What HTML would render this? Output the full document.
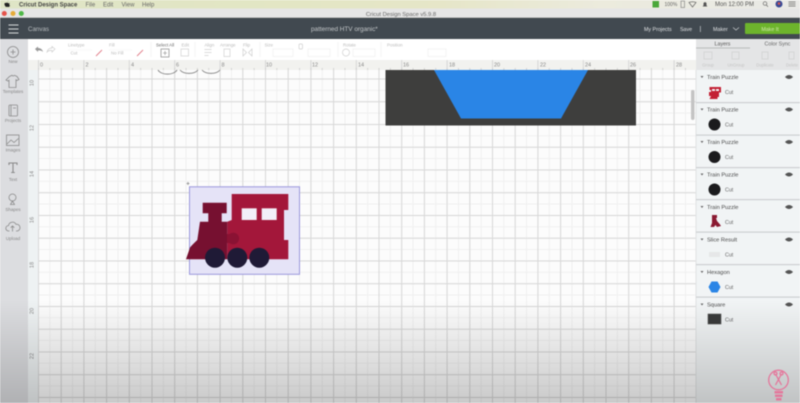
<!DOCTYPE html>
<html><head><meta charset="utf-8"><style>
html,body{margin:0;padding:0;background:#fff;width:800px;height:403px;overflow:hidden}
svg{display:block;filter:blur(.6px)}
text{font-family:"Liberation Sans",sans-serif}
.l{font-size:4.5px;fill:#888;text-anchor:middle}
.t{font-size:4.4px;fill:#bbb}
.r{font-size:5.5px;fill:#888}
.n{font-size:5.7px;fill:#4a4a4a}
.c{font-size:5.3px;fill:#666}
.d{font-size:4.2px;fill:#c4c4c4;text-anchor:middle}
.i{fill:none;stroke:#8a8a8a;stroke-width:.8}
.g{fill:none;stroke:#cfcfcf;stroke-width:.7}
.m{font-size:6px;fill:#666}
</style></head><body>
<svg width="800" height="403" viewBox="0 0 800 403" xmlns="http://www.w3.org/2000/svg">
<defs>
<linearGradient id="mb" x1="0" x2="1" y1="0" y2="0"><stop offset="0" stop-color="#dfe5c6"/><stop offset=".35" stop-color="#e3e6c4"/><stop offset=".55" stop-color="#e6e6c8"/><stop offset=".75" stop-color="#ecebdd"/><stop offset="1" stop-color="#e9e9e6"/></linearGradient>
<linearGradient id="sh" x1="0" x2="0" y1="0" y2="1"><stop offset="0" stop-color="#000" stop-opacity="0"/><stop offset="1" stop-color="#000" stop-opacity=".2"/></linearGradient>
<pattern id="gmin" x="38" y="67.1" width="11.35" height="11.37" patternUnits="userSpaceOnUse"><path d="M.5 0V11.37M0 .5H11.35" stroke="#f0f0f0" stroke-width="1" fill="none"/></pattern>
<pattern id="gmaj" x="38" y="78.5" width="22.7" height="22.75" patternUnits="userSpaceOnUse"><path d="M.5 0V22.75M0 .5H22.7" stroke="#d8d8d8" stroke-width="1" fill="none"/></pattern>
<pattern id="tick" x="38" y="60" width="11.35" height="10" patternUnits="userSpaceOnUse"><path d="M.5 8V10" stroke="#c4c4c4" stroke-width=".7"/></pattern>
<pattern id="tick2" x="38" y="60" width="45.4" height="10" patternUnits="userSpaceOnUse"><path d="M.5 0V10" stroke="#d0d0d0" stroke-width=".8"/></pattern>
</defs>

<rect x="28" y="60" width="668" height="343" fill="#fcfcfc"/>
<rect x="38" y="70" width="658" height="333" fill="url(#gmin)"/>
<rect x="38" y="70" width="658" height="333" fill="url(#gmaj)"/>

<rect x="28" y="60" width="668" height="10" fill="#f2f2ef"/>
<rect x="38" y="60" width="658" height="10" fill="url(#tick)"/>
<rect x="38" y="60" width="658" height="10" fill="url(#tick2)"/>
<rect x="28" y="70" width="10" height="333" fill="#eef2f3"/>
<g class="r">
<text x="40" y="66.5">0</text><text x="85.5" y="66.5">2</text><text x="131" y="66.5">4</text><text x="176" y="66.5">6</text><text x="221.5" y="66.5">8</text><text x="266" y="66.5">10</text><text x="312" y="66.5">12</text><text x="358" y="66.5">14</text><text x="403" y="66.5">16</text><text x="449" y="66.5">18</text><text x="494" y="66.5">20</text><text x="540" y="66.5">22</text><text x="585" y="66.5">24</text><text x="630" y="66.5">26</text><text x="676" y="66.5">28</text>
<text transform="translate(33.5,83) rotate(-90)" text-anchor="middle">10</text>
<text transform="translate(33.5,128) rotate(-90)" text-anchor="middle">12</text>
<text transform="translate(33.5,174) rotate(-90)" text-anchor="middle">14</text>
<text transform="translate(33.5,220) rotate(-90)" text-anchor="middle">16</text>
<text transform="translate(33.5,265) rotate(-90)" text-anchor="middle">18</text>
<text transform="translate(33.5,311) rotate(-90)" text-anchor="middle">20</text>
<text transform="translate(33.5,356) rotate(-90)" text-anchor="middle">22</text>
</g>

<path d="M158 70A10 6 0 0 0 177 70M180 70A10 6 0 0 0 198 70M202 70A10 6 0 0 0 220 70" fill="none" stroke="#888" stroke-width=".9"/>

<rect x="385.5" y="70" width="250.5" height="55.5" fill="#3e3e3d"/>
<polygon points="434,70 588,70 561,118.5 461,118.5" fill="#2a85e6"/>

<rect x="189.5" y="186.8" width="110" height="87.5" fill="#e5e3f7" stroke="#9b98dc" stroke-width="1"/>
<path d="M186.5 183.5h3M188 182v3" stroke="#888" stroke-width=".7"/>
<path d="M231.7 194H288.3V210H284V240H288.3V259.3H227.3V221.7L231.7 220Z" fill="#a3173a"/>
<rect x="241.7" y="208.3" width="15" height="11.7" fill="#f2eff8"/>
<rect x="261.7" y="208.3" width="15" height="11.7" fill="#f2eff8"/>
<path d="M202.7 202.7H226.7V213.3H221.7V221.7H227.3V259.3H186L190 247.5Q192 245 197.3 240L200 221.7H208.3V213.3H202.7Z" fill="#761030"/>
<circle cx="233.3" cy="238.5" r="5.8" fill="#8a1233"/>
<rect x="227" y="234" width="5" height="9" fill="#8a1233"/>
<circle cx="215" cy="257.7" r="10" fill="#1f1a36"/>
<circle cx="237.3" cy="257.7" r="10" fill="#1f1a36"/>
<circle cx="259.3" cy="257.7" r="10" fill="#1f1a36"/>

<rect x="691" y="90" width="3.5" height="30" rx="1.7" fill="#c4c4c4"/>

<rect x="0" y="39" width="28" height="364" fill="#dcdde0"/>
<circle cx="13" cy="52" r="5.5" class="i"/><path d="M10.5 52h5M13 49.5v5" class="i"/>
<path d="M9.5 76.5l2.5-1.2q1 1.2 2.500 0l2.500 1.200 2 3-2 1-1-.8V87.500H9v-7.300l-1 .8-2-1Z" class="i"/>
<rect x="9" y="105" width="8.5" height="11" rx="1" class="i"/><path d="M11 105v11M13 108h3" class="i"/>
<rect x="6.5" y="135" width="12.5" height="10.5" class="i"/><path d="M7 144l4-4 3 2.500 4.500-4" class="i"/>
<path d="M9 165v-2h8v2M13 163V172.5M11.2 172.5h3.600" fill="none" stroke="#8a8a8a" stroke-width="1.1"/>
<circle cx="12.5" cy="197.5" r="3.5" class="i"/><path d="M12.5 201l-2 3.500h4Z" class="i"/>
<path d="M9.5 231h-1a2.700 2.700 0 0 1 0-5.400 4 4 0 0 1 7.500-1.300 3.200 3.200 0 0 1 1.200 6.700h-1.200M12.500 231.500v-5.500M10.700 227.700l1.800-1.800 1.800 1.800" class="i"/>
<g class="l">
<text x="13" y="63">New</text><text x="13" y="93">Templates</text><text x="13" y="122">Projects</text><text x="13" y="151.5">Images</text><text x="13" y="181">Text</text><text x="13" y="211">Shapes</text><text x="13" y="240">Upload</text>
</g>

<rect x="28" y="39" width="668" height="21" fill="#fff"/>
<path d="M35 49l3-2.500v1.500q4 0 5 4q-2-2-5-1.500v1.500Z" fill="#999"/>
<path d="M55 49l-3-2.500v1.500q-4 0-5 4q2-2 5-1.500v1.500Z" class="g"/>
<g class="t">
<text x="68" y="46.5">Linetype</text><text x="109" y="46.5">Fill</text><text x="181.5" y="46.5">Edit</text><text x="204.5" y="46.5">Align</text><text x="220" y="46.5">Arrange</text><text x="243" y="46.5">Flip</text><text x="264.5" y="46.5">Size</text><text x="343" y="46.5">Rotate</text><text x="387" y="46.5">Position</text>
<text x="70.5" y="54.5">Cut</text><text x="111" y="54.5">No Fill</text>
</g>
<text x="156" y="46.5" style="font-size:4.4px;fill:#666">Select All</text>
<rect x="161" y="49" width="8" height="8" fill="none" stroke="#888" stroke-width=".7"/><path d="M163 53h4M165 51v4" stroke="#888" stroke-width=".6"/>
<path d="M96 56l6-6M137 56l6-6" stroke="#e2808c" stroke-width=".9"/>
<path d="M68 50h24M109 50h23" fill="none" stroke="#f2f2f2" stroke-width=".6"/>
<rect x="181" y="49" width="7.5" height="7" class="g"/>
<path d="M204.5 49.5h7M204.5 52.5h7M204.5 55.5h4" class="g"/>
<rect x="224" y="49" width="6" height="7.5" class="g"/>
<path d="M243 49l3.500 3.500-3.500 3.500ZM252 49l-3.500 3.500 3.500 3.500Z" class="g"/>
<rect x="273" y="49" width="20" height="7.5" fill="none" stroke="#f0f0f0" stroke-width=".7"/>
<rect x="308" y="49" width="22" height="7.5" fill="none" stroke="#f0f0f0" stroke-width=".7"/>
<rect x="299" y="44" width="3.5" height="5" rx="1" class="g"/>
<circle cx="346" cy="52.5" r="3.5" class="g"/>
<rect x="353" y="49" width="22" height="7.5" fill="none" stroke="#f0f0f0" stroke-width=".7"/>
<rect x="428" y="49" width="18" height="7.5" fill="none" stroke="#f0f0f0" stroke-width=".7"/>
<path d="M195 42v15M260 42v15M338 42v15M381 42v15M151 42v15" stroke="#f0f0f0" stroke-width=".7"/>

<rect x="696" y="39" width="104" height="364" fill="#f1f4f5"/>
<rect x="696" y="39" width="104" height="31" fill="#e4e5e6"/>
<rect x="696" y="47.5" width="54" height="1" fill="#b9babb"/>
<text x="722.5" y="45.5" text-anchor="middle" style="font-size:5.3px;fill:#555">Layers</text>
<text x="777.5" y="45.5" text-anchor="middle" style="font-size:5.3px;fill:#666">Color Sync</text>
<rect x="704" y="52" width="8" height="7" class="g"/><rect x="732" y="52" width="7" height="7" class="g"/><rect x="762" y="52" width="6" height="7" class="g"/><rect x="789" y="52" width="5" height="7" class="g"/>
<g class="d"><text x="708" y="66.5">Group</text><text x="736" y="66.5">UnGroup</text><text x="765" y="66.5">Duplicate</text><text x="792" y="66.5">Delete</text></g>
<path d="M696 70V403" stroke="#e0e2e3" stroke-width="1"/>

<g fill="#cdd0d2">
<rect x="696" y="102" width="104" height="1.2"/><rect x="696" y="134.5" width="104" height="1.2"/><rect x="696" y="167" width="104" height="1.2"/><rect x="696" y="199" width="104" height="1.2"/><rect x="696" y="231.5" width="104" height="1.2"/><rect x="696" y="264" width="104" height="1.2"/><rect x="696" y="296.5" width="104" height="1.2"/>
</g>
<g class="n">
<text x="707" y="79">Train Puzzle</text><text x="707" y="111.5">Train Puzzle</text><text x="707" y="144">Train Puzzle</text><text x="707" y="176.5">Train Puzzle</text><text x="707" y="209">Train Puzzle</text><text x="707" y="241.5">Slice Result</text><text x="707" y="274">Hexagon</text><text x="707" y="306.5">Square</text>
</g>
<g fill="#666">
<path d="M700.5 76h3l-1.500 2Z"/><path d="M700.5 108.5h3l-1.500 2Z"/><path d="M700.5 141h3l-1.500 2Z"/><path d="M700.5 173.5h3l-1.500 2Z"/><path d="M700.5 206h3l-1.500 2Z"/><path d="M700.5 238.5h3l-1.500 2Z"/><path d="M700.5 271h3l-1.500 2Z"/><path d="M700.5 303.5h3l-1.500 2Z"/>
</g>
<g fill="#555">
<path d="M785 77q4-4 8 0q-4 4-8 0Z"/><path d="M785 109.5q4-4 8 0q-4 4-8 0Z"/><path d="M785 142q4-4 8 0q-4 4-8 0Z"/><path d="M785 174.5q4-4 8 0q-4 4-8 0Z"/><path d="M785 207q4-4 8 0q-4 4-8 0Z"/><path d="M785 239.5q4-4 8 0q-4 4-8 0Z"/><path d="M785 272q4-4 8 0q-4 4-8 0Z"/><path d="M785 304.5q4-4 8 0q-4 4-8 0Z"/>
</g>
<g class="c">
<text x="725" y="94">Cut</text><text x="725" y="126.5">Cut</text><text x="725" y="159">Cut</text><text x="725" y="191.5">Cut</text><text x="725" y="224">Cut</text><text x="725" y="256.5">Cut</text><text x="725" y="289">Cut</text><text x="725" y="321.5">Cut</text>
</g>
<path d="M709.5 87H721V92.5H719V97H717.5V99H709.5L711 96H709V92H711V90H709.5Z" fill="#c32033"/>
<rect x="712" y="89" width="3" height="2" fill="#f1f4f5"/><rect x="716" y="89" width="3" height="2" fill="#f1f4f5"/>
<circle cx="714.5" cy="124.5" r="6" fill="#1b1b1d"/>
<circle cx="714.5" cy="157" r="6" fill="#1b1b1d"/>
<circle cx="714.5" cy="189.5" r="6" fill="#1b1b1d"/>
<path d="M712 215h5v3h-1l1 3 3 3.500 1 1.500-4 1-1.500-2-1.500 2h-3.500l1.500-4Z" fill="#8a1a32"/>
<rect x="709" y="252" width="11" height="5" fill="#e6e7e8"/>
<polygon points="708.5,287 711.5,281.5 717.5,281.5 720.5,287 717.5,292.5 711.5,292.5" fill="#2a85e6"/>
<rect x="708" y="314" width="13" height="10" fill="#3a3b3b" stroke="#555" stroke-width=".6"/>

<rect x="0" y="300" width="800" height="103" fill="url(#sh)"/>

<g fill="none" stroke="#e4789c" stroke-width="1.3">
<circle cx="778.5" cy="380" r="9.8"/>
<path d="M775.5 374l6 11M781.5 374l-6 11"/>
<circle cx="775.5" cy="373.5" r="1.5"/><circle cx="781.5" cy="373.5" r="1.5"/>
</g>
<g fill="#e4789c"><rect x="774.5" y="391" width="8.5" height="2.5"/><rect x="775" y="394.5" width="7.5" height="2.5"/><rect x="776" y="398" width="5.5" height="2.5"/></g>

<rect x="0" y="0" width="800" height="8.5" fill="url(#mb)"/>
<path d="M7.5 1.5q.8-.2 1-1.200M6 3q1-.8 2 0t2-.2q-1 .8-.6 2 .2.700.6 1-1 1.500-2 1.200-1-.4-2 0-1.800-1.700-1.500-3.500.3-1 1.500-.5Z" fill="#222"/>
<text x="19" y="6.3" style="font-size:6px;font-weight:bold;fill:#444">Cricut Design Space</text>
<g class="m"><text x="85.5" y="6.3">File</text><text x="103" y="6.3">Edit</text><text x="121.5" y="6.3">View</text><text x="142" y="6.3">Help</text></g>
<rect x="652.5" y="1" width="6.5" height="6.5" fill="#4aa83a"/>
<text x="664.5" y="5.8" style="font-size:5px;fill:#666">100%</text>
<rect x="681" y="1" width="3.5" height="6.5" fill="none" stroke="#888" stroke-width=".7"/>
<path d="M689 2.5q3.500-1.500 7 0L692.500 7Z" fill="none" stroke="#666" stroke-width=".7"/>
<path d="M702.5 6.5h5l-1-1V3l-1.500-1-1.500 1v2.500Z" fill="#555"/>
<text x="715" y="6" style="font-size:6px;fill:#555">Mon 12:00 PM</text>
<circle cx="765" cy="3.5" r="1.8" fill="none" stroke="#666" stroke-width=".7"/><path d="M766.3 5l1.700 1.700" stroke="#666" stroke-width=".7"/>
<circle cx="779" cy="4" r="3.5" fill="#3a4a95"/><circle cx="779" cy="3.5" r="1.3" fill="#d9534f"/>
<path d="M788.5 2h7M788.5 4h7M788.5 6h7" stroke="#666" stroke-width=".8"/>

<rect x="0" y="8.5" width="800" height="9.5" fill="#e6e6e6"/>
<rect x="0" y="17.5" width="800" height="1" fill="#9c9c9c"/>
<circle cx="4.3" cy="13.5" r="2.5" fill="#e5544c"/>
<circle cx="13" cy="13.5" r="2.5" fill="#e6ac3a"/>
<circle cx="21.3" cy="13.5" r="2.5" fill="#4fb848"/>
<text x="401" y="16" text-anchor="middle" style="font-size:5.8px;fill:#666">Cricut Design Space  v5.9.8</text>

<rect x="0" y="18" width="800" height="21" fill="#414950"/>
<path d="M8.5 25h10M8.5 29h10M8.5 33h10" stroke="#d8dadc" stroke-width="1.1"/>
<text x="28" y="31" style="font-size:6.2px;fill:#b8bcbf">Canvas</text>
<text x="311" y="31" style="font-size:6.4px;fill:#c4c7c9">patterned HTV organic*</text>
<text x="644" y="31" style="font-size:5.3px;fill:#dfe1e3">My Projects</text>
<text x="680" y="31" style="font-size:5.3px;fill:#dfe1e3">Save</text>
<rect x="700" y="26" width=".7" height="6" fill="#c0c4c7"/>
<text x="713" y="31" style="font-size:5.3px;fill:#dfe1e3">Maker</text>
<path d="M733 27.5l3 2.500 3-2.500" fill="none" stroke="#c9ccce" stroke-width=".7"/>
<rect x="745" y="23" width="55" height="11" rx="1" fill="#6db42c"/>
<text x="770" y="31" text-anchor="middle" style="font-size:5.3px;fill:#cfe8a8">Make It</text>
</svg>
</body></html>
